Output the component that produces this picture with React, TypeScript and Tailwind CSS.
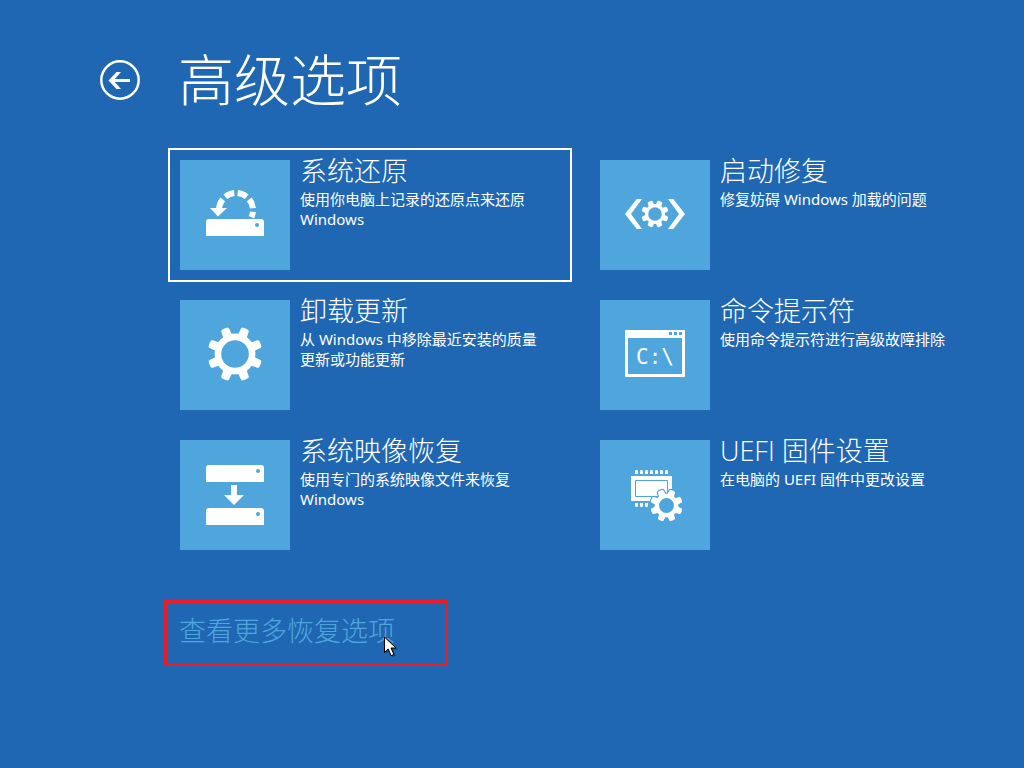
import type { ReactNode } from "react";

interface GearProps {
  cx: number;
  cy: number;
  scale: number;
  hole?: number;
  tooth?: string;
}

interface RecoveryOption {
  id: string;
  title: string;
  description: string;
  icon: ReactNode;
}

const TEETH = [22.5, 67.5, 112.5, 157.5, 202.5, 247.5, 292.5, 337.5];
const TOOTH = "M-4.6 -18 L-4.2 -25.8 Q-4 -27.2 -2.6 -27.4 Q0 -27.9 2.6 -27.4 Q4 -27.2 4.2 -25.8 L4.6 -18 Z";
// small gears need wider teeth to stay readable
const WIDE_TOOTH = "M-6 -18 L-5.2 -25.8 Q-5 -27.2 -3.4 -27.6 Q0 -28.2 3.4 -27.6 Q5 -27.2 5.2 -25.8 L6 -18 Z";

function Gear({ cx, cy, scale, hole = 13.8, tooth = TOOTH }: GearProps) {
  return (
    <g transform={`translate(${cx} ${cy}) scale(${scale})`}>
      <circle r={(hole + 20.4) / 2} fill="none" stroke="#fff" strokeWidth={20.4 - hole} />
      {TEETH.map((angle) => (
        <path key={angle} d={tooth} transform={`rotate(${angle})`} fill="#fff" />
      ))}
    </g>
  );
}

function Drive({ y, dotX = 78 }: { y: number; dotX?: number }) {
  return (
    <g transform={`translate(0 ${y})`}>
      <path d="M26 17V3a3 3 0 0 1 3-3h52a3 3 0 0 1 3 3v14z" fill="#fff" />
      <circle cx={dotX} cy="6" r="2" fill="#4ea6dc" />
    </g>
  );
}

function Tile({ children }: { children: ReactNode }) {
  return (
    <svg viewBox="0 0 110 110" className="size-[110px] shrink-0 bg-[#4ea6dc]" aria-hidden="true">
      {children}
    </svg>
  );
}

function RestoreIcon() {
  return (
    <Tile>
      <circle
        cx="56"
        cy="50"
        r="17"
        fill="none"
        stroke="#fff"
        strokeWidth="6"
        pathLength="360"
        strokeDasharray="43 12 33 12 33 12 33 12 19 151"
        transform="rotate(176 56 50)"
      />
      <path d="M30 48h17l-9 8.5z" fill="#fff" />
      <Drive y={59} dotX={77} />
    </Tile>
  );
}

function StartupRepairIcon() {
  return (
    <Tile>
      <path d="M36.7 39H42L31 54l11 15h-5.3L25 54zM73.3 39H68l11 15-11 15h5.3L85 54z" fill="#fff" />
      <Gear cx={55} cy={54} scale={0.49} tooth={WIDE_TOOTH} />
    </Tile>
  );
}

function UninstallIcon() {
  return (
    <Tile>
      <Gear cx={55} cy={54} scale={1} />
    </Tile>
  );
}

function CommandPromptIcon() {
  return (
    <Tile>
      <path
        fillRule="evenodd"
        d="M26 30h58a1 1 0 0 1 1 1v45a1 1 0 0 1-1 1H26a1 1 0 0 1-1-1V31a1 1 0 0 1 1-1zM28 38v36h54V38zM69 32v3h3v-3zM74 32v3h3v-3zM79 32v3h3v-3z"
        fill="#fff"
      />
      <text x="55" y="64" textAnchor="middle" fill="#fff" className="font-['DejaVu_Sans_Mono',monospace] text-[21px]">
        C:\
      </text>
    </Tile>
  );
}

function ImageRecoveryIcon() {
  return (
    <Tile>
      <Drive y={25} />
      <path d="M51 45h6v10h7L54 65 44 55h7z" fill="#fff" />
      <Drive y={68} />
    </Tile>
  );
}

function FirmwareIcon() {
  return (
    <Tile>
      {[35, 40, 45, 50, 55, 60, 65].map((x) => (
        <path key={x} d={`M${x} 34v-2l.5-2h2l.5 2v2z`} fill="#fff" />
      ))}
      {[35, 40, 45].map((x) => (
        <path key={x} d={`M${x} 63v2l.5 2h2l.5-2v-2z`} fill="#fff" />
      ))}
      <path d="M31 36h41v25H31z" fill="#fff" />
      <path d="M35.5 40.5h32v16h-32z" fill="none" stroke="#4ea6dc" />
      <g stroke="#4ea6dc" strokeWidth="4" transform="translate(66.5 65.5) scale(0.58)">
        {TEETH.map((angle) => (
          <path key={angle} d={WIDE_TOOTH} transform={`rotate(${angle})`} />
        ))}
        <circle r="20.4" fill="#4ea6dc" />
      </g>
      <Gear cx={66.5} cy={65.5} scale={0.58} hole={12.8} tooth={WIDE_TOOTH} />
    </Tile>
  );
}

const options: RecoveryOption[] = [
  {
    id: "restore",
    title: "系统还原",
    description: "使用你电脑上记录的还原点来还原 Windows",
    icon: <RestoreIcon />,
  },
  {
    id: "startup",
    title: "启动修复",
    description: "修复妨碍 Windows 加载的问题",
    icon: <StartupRepairIcon />,
  },
  {
    id: "uninstall",
    title: "卸载更新",
    description: "从 Windows 中移除最近安装的质量更新或功能更新",
    icon: <UninstallIcon />,
  },
  {
    id: "cmd",
    title: "命令提示符",
    description: "使用命令提示符进行高级故障排除",
    icon: <CommandPromptIcon />,
  },
  {
    id: "image",
    title: "系统映像恢复",
    description: "使用专门的系统映像文件来恢复 Windows",
    icon: <ImageRecoveryIcon />,
  },
  {
    id: "uefi",
    title: "UEFI 固件设置",
    description: "在电脑的 UEFI 固件中更改设置",
    icon: <FirmwareIcon />,
  },
];

function OptionButton({ option, selected }: { option: RecoveryOption; selected: boolean }) {
  return (
    <button
      type="button"
      className={`flex items-start gap-[10px] border-2 p-[10px] text-left ${selected ? "border-white" : "border-transparent"}`}
    >
      {option.icon}
      <span className="block min-w-0 max-w-[244px]">
        <span className="block text-[27px] font-light leading-[22px]">{option.title}</span>
        <span className="mt-[7px] block font-['Noto_Sans','Noto_Sans_CJK_SC',sans-serif] text-[15px] leading-5">
          {option.description}
        </span>
      </span>
    </button>
  );
}

export default function App() {
  return (
    <main
      lang="zh-CN"
      className="min-h-screen bg-[#1f67b2] pb-10 pl-[100px] pr-8 pt-10 font-['Open_Sans','Noto_Sans_CJK_SC',sans-serif] text-white"
    >
      <header className="flex items-center gap-[38px]">
        <button type="button" aria-label="返回" className="size-10 shrink-0">
          <svg viewBox="0 0 40 40" className="size-10" fill="none" stroke="#fff">
            <circle cx="20" cy="20" r="18.7" strokeWidth="2.5" />
            <path d="M30 20.5H11" strokeWidth="3" />
            <path d="M21 12h-4.5l-8 8.5 8 8.5H21l-7.5-8.5z" fill="#fff" stroke="none" />
          </svg>
        </button>
        <h1 className="pb-0.5 text-[56px] font-light leading-[78px]">高级选项</h1>
      </header>

      <div className="ml-[68px] mt-7 grid grid-cols-2 gap-x-4 gap-y-[6px]">
        {options.map((option) => (
          <OptionButton key={option.id} option={option} selected={option.id === "restore"} />
        ))}
      </div>

      <div className="relative ml-16 mt-[38px] w-[284px] border-[3px] border-[#ed1c24] pb-[17px] pl-3 pt-[13px]">
        <a href="#more" className="block text-[27px] font-light leading-[30px] text-[#4ea6dc]">
          查看更多恢复选项
        </a>
        <svg viewBox="0 0 14 22" className="absolute left-[217px] top-[33px] h-[22px] w-[14px]" aria-hidden="true">
          <path d="M2 3v15l3.5-3.5 3 6.5 3-1.2-2.6-6.3H14z" fill="#000" opacity="0.3" />
          <path d="M.5 1v15.5L4.2 13l2.9 6.6 2.8-1.2L7 12h5z" fill="#fff" stroke="#000" />
        </svg>
      </div>
    </main>
  );
}
